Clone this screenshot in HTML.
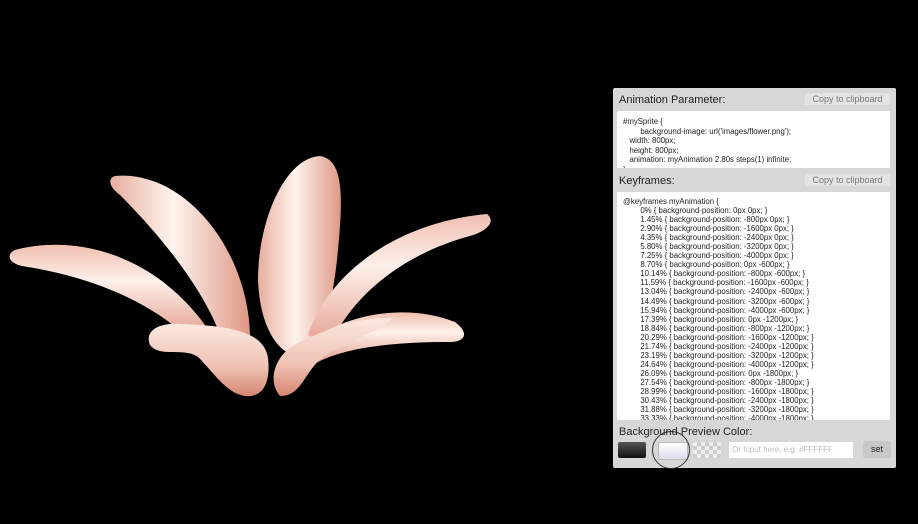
<!DOCTYPE html>
<html><head><meta charset="utf-8"><style>
html,body{margin:0;padding:0;background:#000;width:918px;height:524px;overflow:hidden;font-family:"Liberation Sans",sans-serif}
#panel{position:absolute;left:613px;top:88px;width:283px;height:380px;background:#d7d7d7;border-radius:2px}
.h{position:absolute;left:6px;font-size:11px;color:#222}
.btn{position:absolute;left:192px;width:85px;height:12px;background:#e4e4e4;border-radius:2px;font-size:9px;color:#777;text-align:center;line-height:12px}
.ta{position:absolute;left:4px;width:273px;background:#fff;font-size:7.8px;color:#222;overflow:hidden;line-height:9.5px;white-space:pre;border-radius:1px;box-sizing:border-box}
</style></head><body>
<svg width="918" height="524" style="position:absolute;left:0;top:0">
<defs>
<linearGradient id="g1" x1="0" y1="0" x2="0" y2="1"><stop offset="0" stop-color="#f0bfb0"/><stop offset=".4" stop-color="#fdf0ea"/><stop offset="1" stop-color="#e5a190"/></linearGradient>
<linearGradient id="g2" x1="0" y1="0" x2="1" y2="0"><stop offset="0" stop-color="#e8ae9e"/><stop offset=".45" stop-color="#fef4ee"/><stop offset="1" stop-color="#df9784"/></linearGradient>
<linearGradient id="g3" x1="0" y1="0" x2="0" y2="1"><stop offset="0" stop-color="#fbe8e0"/><stop offset=".6" stop-color="#f0c2b3"/><stop offset="1" stop-color="#d68573"/></linearGradient>
</defs>
<path d="M15,250 C70,235 150,250 205,325 L185,335 C140,295 80,275 22,266 C8,263 6,254 15,250Z" fill="url(#g1)"/>
<path d="M115,176 C185,170 248,250 250,335 L222,340 C205,290 160,235 120,195 C108,186 108,178 115,176Z" fill="url(#g2)"/>
<path d="M320,156 C345,160 343,200 337,260 C331,312 320,352 300,356 C280,356 260,330 258,280 C258,220 285,158 320,156Z" fill="url(#g2)"/>
<path d="M487,214 C497,222 485,232 470,236 C410,252 355,290 330,345 L308,335 C330,270 400,222 487,214Z" fill="url(#g1)"/>
<path d="M455,322 C470,333 465,342 450,342 C400,342 350,346 318,362 L298,352 C330,318 400,300 455,322Z" fill="url(#g1)"/>
<path d="M150,345 C144,330 160,322 182,324 C232,326 264,332 268,358 C271,384 262,398 245,396 C225,393 212,370 198,357 C184,347 160,358 150,345Z" fill="url(#g3)"/>
<path d="M280,396 C266,380 276,352 300,342 C330,328 356,318 392,318 C382,332 342,342 322,358 C304,372 302,396 280,396Z" fill="url(#g3)"/>
</svg>
<div id="panel">
<div class="h" style="top:6px">Animation Parameter:</div>
<div class="btn" style="top:5px">Copy to clipboard</div>
<div class="ta" style="top:23px;height:57px;padding:6px 0 0 6px">#mySprite {
        background-image: url('images/flower.png');
   width: 800px;
   height: 800px;
   animation: myAnimation 2.80s steps(1) infinite;
}</div>
<div class="h" style="top:87px">Keyframes:</div>
<div class="btn" style="top:86px">Copy to clipboard</div>
<div class="ta" style="top:104px;height:228px;padding:5px 0 0 6px;line-height:9.05px">@keyframes myAnimation {
        0% { background-position: 0px 0px; }
        1.45% { background-position: -800px 0px; }
        2.90% { background-position: -1600px 0px; }
        4.35% { background-position: -2400px 0px; }
        5.80% { background-position: -3200px 0px; }
        7.25% { background-position: -4000px 0px; }
        8.70% { background-position: 0px -600px; }
        10.14% { background-position: -800px -600px; }
        11.59% { background-position: -1600px -600px; }
        13.04% { background-position: -2400px -600px; }
        14.49% { background-position: -3200px -600px; }
        15.94% { background-position: -4000px -600px; }
        17.39% { background-position: 0px -1200px; }
        18.84% { background-position: -800px -1200px; }
        20.29% { background-position: -1600px -1200px; }
        21.74% { background-position: -2400px -1200px; }
        23.19% { background-position: -3200px -1200px; }
        24.64% { background-position: -4000px -1200px; }
        26.09% { background-position: 0px -1800px; }
        27.54% { background-position: -800px -1800px; }
        28.99% { background-position: -1600px -1800px; }
        30.43% { background-position: -2400px -1800px; }
        31.88% { background-position: -3200px -1800px; }
        33.33% { background-position: -4000px -1800px; }</div>
<div class="h" style="top:338px">Background Preview Color:</div>
<div style="position:absolute;left:5px;top:354px;width:28px;height:16px;background:linear-gradient(#555,#111);border-radius:2px"></div>
<div style="position:absolute;left:45px;top:354px;width:28px;height:16px;background:linear-gradient(#fff,#dde);border-radius:2px;border:1px solid #bbb"></div>
<div style="position:absolute;left:80px;top:354px;width:28px;height:16px;background:repeating-conic-gradient(#ccc 0 25%,#eee 0 50%) 0 0/8px 8px;border-radius:2px"></div>
<div style="position:absolute;left:39px;top:343px;width:36px;height:36px;border:1.5px solid #333;border-radius:50%"></div>
<div style="position:absolute;left:116px;top:354px;width:124px;height:16px;background:#fff;font-size:8px;color:#bbb;line-height:16px;padding-left:3px;box-sizing:border-box">Or Input here, e.g. #FFFFFF</div>
<div style="position:absolute;left:250px;top:353px;width:28px;height:17px;background:#c8c8c8;border-radius:2px;font-size:9px;text-align:center;line-height:17px;color:#222">set</div>
</div>
</body></html>
